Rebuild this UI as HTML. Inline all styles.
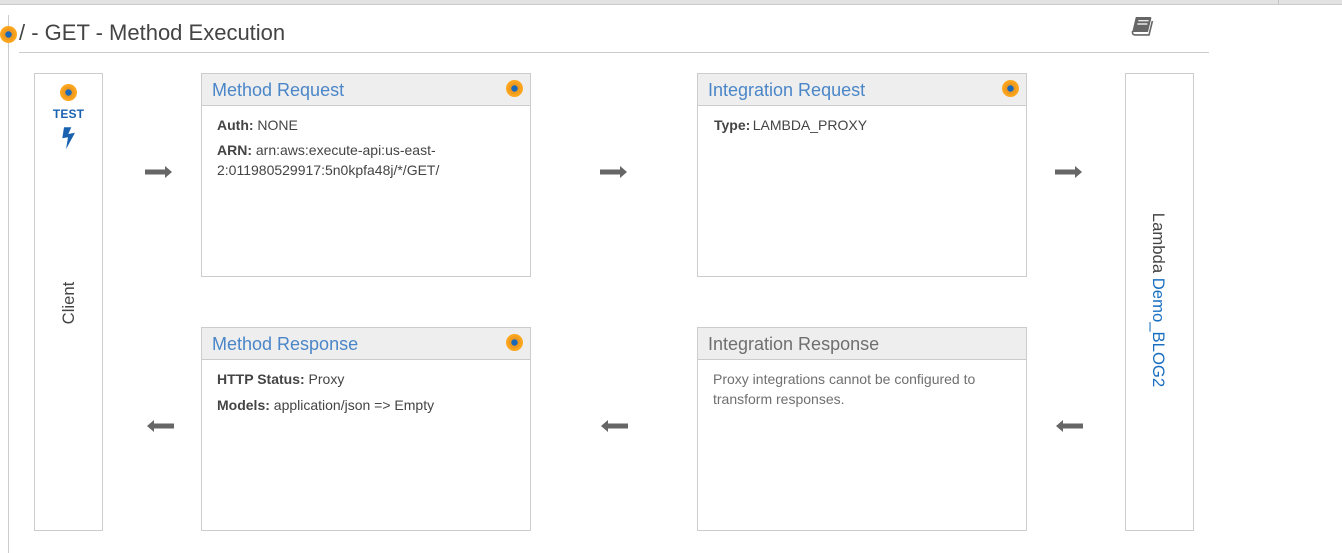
<!DOCTYPE html>
<html>
<head>
<meta charset="utf-8">
<style>
html,body{margin:0;padding:0;background:#fff;width:1342px;height:553px;overflow:hidden}
body{position:relative;font-family:"Liberation Sans",Arial,sans-serif;color:#444;font-size:14px}
.a{position:absolute}
.box{position:absolute;box-sizing:border-box;width:330px;height:204px;border:1px solid #ccc;background:#fff}
.hd{box-sizing:border-box;height:32px;background:#eee;border-bottom:1px solid #ccc;font-size:18px;line-height:32px;padding-left:10px;color:#4a86c8;white-space:nowrap}
.t{position:absolute;white-space:nowrap;line-height:20px;font-size:14px;color:#444}
.t b{color:#444}
.dot{position:absolute;width:17px;height:17px;border-radius:50%;background:radial-gradient(circle,#1a68b8 0 2.8px,#ef9a1e 3.6px 5.6px,#fca61e 6.4px)}
.side{position:absolute;box-sizing:border-box;width:69px;height:458px;top:73px;border:1px solid #ccc;background:#fff}
svg{position:absolute;overflow:visible}
</style>
</head>
<body>
<div class="a" style="left:0;top:0;width:1342px;height:4px;background:#e2e2e2"></div>
<div class="a" style="left:0;top:4px;width:1342px;height:1px;background:#ccc"></div>
<div class="a" style="left:1278px;top:0;width:1px;height:4px;background:#c4c4c4"></div>
<div class="a" style="left:8px;top:15px;width:1px;height:538px;background:#ccc"></div>
<div class="dot" style="left:0;top:26px"></div>
<div class="a" style="left:19px;top:18px;font-size:22px;line-height:30px;color:#444;white-space:nowrap">/ - GET - Method Execution</div>
<div class="a" style="left:19px;top:52px;width:1190px;height:1px;background:#ccc"></div>

<svg style="left:1131px;top:16px" width="23" height="21" viewBox="0 0 23 21">
<path d="M21.4 5L18 18.9H4.2Q1.5 18.9 1.5 16.8V15" fill="none" stroke="#666" stroke-width="1.6"/>
<path d="M4.8 1H19.3Q20.6 1 20.3 2.4L17 16H1.2Z" fill="#666"/>
<path d="M7.3 4.7H17.6M6.3 8H16.4" stroke="#e8e8e8" stroke-width="1.4"/>
</svg>

<div class="side" style="left:34px"></div>
<div class="dot" style="left:60px;top:84px"></div>
<div class="a" style="left:34px;top:107px;width:69px;text-align:center;font-size:12px;line-height:14px;font-weight:bold;color:#1a62b0;letter-spacing:.15px">TEST</div>
<svg style="left:61px;top:126px" width="16" height="25" viewBox="0 0 16 25">
<path d="M3 1.3H10.3L7.3 8L14 6.7L5 23.3L7 11.3L1.3 12.3Z" fill="#1a62b0"/>
</svg>
<div class="a" style="left:-31px;top:293px;width:200px;height:20px;text-align:center;font-size:16.7px;line-height:20px;color:#444;transform:rotate(-90deg)">Client</div>

<div class="side" style="left:1125px"></div>
<div class="a" style="left:1058px;top:290px;width:200px;height:20px;text-align:center;font-size:16.7px;line-height:20px;color:#444;white-space:nowrap;transform:rotate(90deg)">Lambda <span style="color:#1a6fc0">Demo_BLOG2</span></div>

<div class="box" style="left:201px;top:73px"><div class="hd">Method Request</div></div>
<div class="dot" style="left:506px;top:80px"></div>
<div class="t" style="left:217px;top:115px"><b>Auth:</b> NONE</div>
<div class="t" style="left:217px;top:140px"><b>ARN:</b> arn:aws:execute-api:us-east-</div>
<div class="t" style="left:217px;top:160px">2:011980529917:5n0kpfa48j/*/GET/</div>

<div class="box" style="left:697px;top:73px"><div class="hd">Integration Request</div></div>
<div class="dot" style="left:1002px;top:80px"></div>
<div class="t" style="left:714px;top:115px"><b style="margin-right:-1.5px">Type:</b> LAMBDA_PROXY</div>

<div class="box" style="left:201px;top:327px"><div class="hd">Method Response</div></div>
<div class="dot" style="left:506px;top:334px"></div>
<div class="t" style="left:217px;top:369px"><b>HTTP Status:</b> Proxy</div>
<div class="t" style="left:217px;top:395px"><b>Models:</b> application/json =&gt; Empty</div>

<div class="box" style="left:697px;top:327px"><div class="hd" style="color:#6f6f6f">Integration Response</div></div>
<div class="t" style="left:713px;top:369px;color:#6f6f6f">Proxy integrations cannot be configured to</div>
<div class="t" style="left:713px;top:389px;color:#6f6f6f">transform responses.</div>

<svg style="left:145px;top:166px" width="27" height="12"><path d="M0 3.5H20V0L27 6L20 12V8.5H0Z" fill="#666"/></svg>
<svg style="left:600px;top:166px" width="27" height="12"><path d="M0 3.5H20V0L27 6L20 12V8.5H0Z" fill="#666"/></svg>
<svg style="left:1055px;top:166px" width="27" height="12"><path d="M0 3.5H20V0L27 6L20 12V8.5H0Z" fill="#666"/></svg>
<svg style="left:147px;top:420px" width="27" height="12"><path d="M27 3.5H7V0L0 6L7 12V8.5H27Z" fill="#666"/></svg>
<svg style="left:601px;top:420px" width="27" height="12"><path d="M27 3.5H7V0L0 6L7 12V8.5H27Z" fill="#666"/></svg>
<svg style="left:1056px;top:420px" width="27" height="12"><path d="M27 3.5H7V0L0 6L7 12V8.5H27Z" fill="#666"/></svg>
</body>
</html>
